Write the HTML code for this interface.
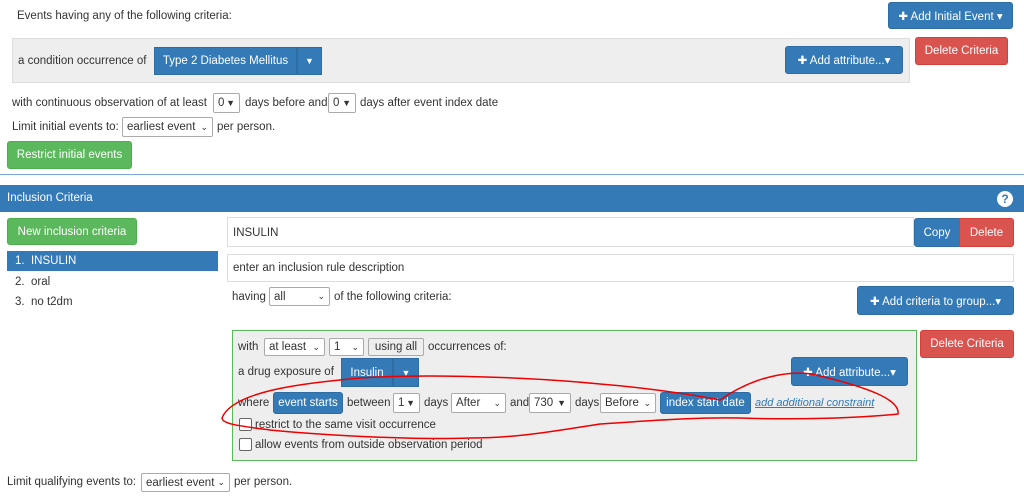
<!DOCTYPE html>
<html><head><style>
body{margin:0;width:1024px;height:496px;background:#fff;font-family:"Liberation Sans",sans-serif;font-size:11.5px;color:#333;position:relative;overflow:hidden}
.a{position:absolute;white-space:nowrap}
.btn{position:absolute;color:#fff;border-radius:3px;box-sizing:border-box;display:flex;align-items:center;justify-content:center;white-space:nowrap;font-size:11.5px}
.b{background:#337ab7;border:1px solid #2e6da4}
.r{background:#d9534f;border:1px solid #d43f3a}
.g{background:#5cb85c;border:1px solid #4cae4c}
.sel{position:absolute;border:1px solid #aaa;background:#fff;box-sizing:border-box;display:flex;align-items:center;padding-left:4px;font-size:11.5px;border-radius:2px}
.sel i{position:absolute;right:4px;font-style:normal;font-size:9px}
.t{position:absolute;transform:translateY(-50%);white-space:nowrap}
.cb{position:absolute;width:11px;height:11px;border:1px solid #666;background:#fff;border-radius:2px}
</style></head><body>
<div class="t" style="left:17px;top:16px">Events having any of the following criteria:</div>
<div class="btn b" style="left:888px;top:2px;width:125px;height:27px">✚ Add Initial Event ▾</div>
<div class="a" style="left:12px;top:38px;width:896px;height:43px;background:#eee;border:1px solid #ddd"></div>
<div class="t" style="left:18px;top:61px">a condition occurrence of</div>
<div class="btn b" style="left:154px;top:47px;width:143px;height:28px;border-radius:0">Type 2 Diabetes Mellitus</div>
<div class="btn b" style="left:297px;top:47px;width:25px;height:28px;border-radius:0;font-size:9px">▼</div>
<div class="btn b" style="left:785px;top:46px;width:118px;height:28px">✚ Add attribute...▾</div>
<div class="btn r" style="left:915px;top:37px;width:93px;height:28px">Delete Criteria</div>
<div class="t" style="left:12px;top:103px">with continuous observation of at least</div>
<div class="sel" style="left:213px;top:93px;width:27px;height:20px">0<i>▼</i></div>
<div class="t" style="left:245px;top:103px">days before and</div>
<div class="sel" style="left:328px;top:93px;width:28px;height:20px">0<i>▼</i></div>
<div class="t" style="left:360px;top:103px">days after event index date</div>
<div class="t" style="left:12px;top:127px">Limit initial events to:</div>
<div class="sel" style="left:122px;top:117px;width:91px;height:20px">earliest event<i>⌄</i></div>
<div class="t" style="left:217px;top:127px">per person.</div>
<div class="btn g" style="left:7px;top:141px;width:125px;height:28px">Restrict initial events</div>
<div class="a" style="left:0;top:174px;width:1024px;height:1px;background:#7aabd8"></div>
<div class="a" style="left:0;top:185px;width:1024px;height:27px;background:#337ab7"></div>
<div class="t" style="left:7px;top:198px;color:#fff">Inclusion Criteria</div>
<div class="a" style="left:997px;top:191px;width:16px;height:16px;border-radius:50%;background:#fff;color:#337ab7;font-weight:bold;font-size:12px;text-align:center;line-height:16px">?</div>
<div class="btn g" style="left:7px;top:218px;width:130px;height:27px">New inclusion criteria</div>
<div class="a" style="left:7px;top:251px;width:211px;height:20px;background:#337ab7"></div>
<div class="t" style="left:15px;top:261px;color:#fff">1.&nbsp; INSULIN</div>
<div class="t" style="left:15px;top:282px">2.&nbsp; oral</div>
<div class="t" style="left:15px;top:302px">3.&nbsp; no t2dm</div>
<div class="a" style="left:227px;top:217px;width:687px;height:30px;border:1px solid #ddd;box-sizing:border-box"></div>
<div class="t" style="left:233px;top:233px">INSULIN</div>
<div class="btn b" style="left:914px;top:218px;width:46px;height:29px;border-radius:3px 0 0 3px">Copy</div>
<div class="btn r" style="left:959px;top:218px;width:55px;height:29px;border-radius:0 3px 3px 0">Delete</div>
<div class="a" style="left:227px;top:254px;width:787px;height:28px;border:1px solid #ddd;box-sizing:border-box"></div>
<div class="t" style="left:233px;top:268px">enter an inclusion rule description</div>
<div class="t" style="left:232px;top:297px">having</div>
<div class="sel" style="left:269px;top:287px;width:61px;height:19px">all<i>⌄</i></div>
<div class="t" style="left:334px;top:297px">of the following criteria:</div>
<div class="btn b" style="left:857px;top:286px;width:157px;height:29px">✚ Add criteria to group...▾</div>
<div class="a" style="left:232px;top:330px;width:683px;height:129px;background:#eee;border:1px solid #5cb85c"></div>
<div class="btn r" style="left:920px;top:330px;width:94px;height:28px">Delete Criteria</div>
<div class="t" style="left:238px;top:347px">with</div>
<div class="sel" style="left:264px;top:338px;width:61px;height:18px">at least<i>⌄</i></div>
<div class="sel" style="left:329px;top:338px;width:35px;height:18px">1<i>⌄</i></div>
<div class="sel" style="left:368px;top:338px;width:56px;height:18px;background:#eee;justify-content:center;padding:0">using all</div>
<div class="t" style="left:428px;top:347px">occurrences of:</div>
<div class="t" style="left:238px;top:372px">a drug exposure of</div>
<div class="btn b" style="left:341px;top:358px;width:52px;height:29px;border-radius:0">Insulin</div>
<div class="btn b" style="left:393px;top:358px;width:26px;height:29px;border-radius:0;font-size:9px">▼</div>
<div class="btn b" style="left:791px;top:357px;width:117px;height:29px">✚ Add attribute...▾</div>
<div class="t" style="left:238px;top:403px">where</div>
<div class="btn b" style="left:273px;top:392px;width:70px;height:22px">event starts</div>
<div class="t" style="left:347px;top:403px">between</div>
<div class="sel" style="left:393px;top:393px;width:27px;height:20px">1<i>▼</i></div>
<div class="t" style="left:424px;top:403px">days</div>
<div class="sel" style="left:451px;top:393px;width:55px;height:20px">After<i>⌄</i></div>
<div class="t" style="left:510px;top:403px">and</div>
<div class="sel" style="left:529px;top:393px;width:42px;height:20px">730<i>▼</i></div>
<div class="t" style="left:575px;top:403px">days</div>
<div class="sel" style="left:600px;top:393px;width:56px;height:20px">Before<i>⌄</i></div>
<div class="btn b" style="left:660px;top:392px;width:91px;height:22px">index start date</div>
<div class="t" style="left:755px;top:403px;color:#337ab7;text-decoration:underline;font-style:italic;font-size:11px">add additional constraint</div>
<div class="cb" style="left:239px;top:418px"></div>
<div class="t" style="left:255px;top:425px">restrict to the same visit occurrence</div>
<div class="cb" style="left:239px;top:438px"></div>
<div class="t" style="left:255px;top:445px">allow events from outside observation period</div>
<div class="t" style="left:7px;top:482px">Limit qualifying events to:</div>
<div class="sel" style="left:141px;top:473px;width:89px;height:19px">earliest event<i>⌄</i></div>
<div class="t" style="left:234px;top:482px">per person.</div>
<svg class="a" style="left:0;top:0" width="1024" height="496"><path d="M222 418 C232 392 300 384 340 380 C400 373 520 376 600 384 C650 388 700 396 720 400 C760 372 800 370 820 376 C870 388 900 400 898 414 C860 418 800 420 740 418 C700 417 660 420 600 424 C560 430 520 438 470 438 C420 440 330 436 270 430 C240 426 222 424 222 418" fill="none" stroke="#e00" stroke-width="1.5"/></svg>
</body></html>
